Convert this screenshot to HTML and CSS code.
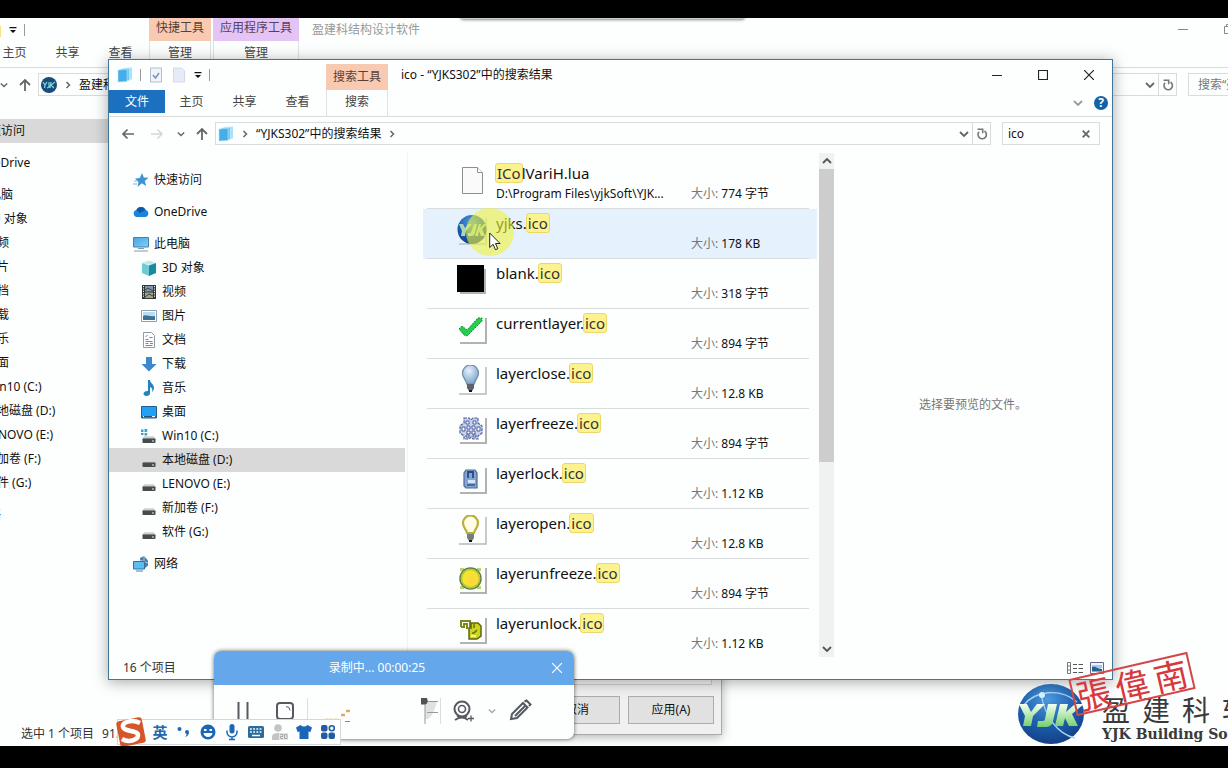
FILE: index.html
```html
<!DOCTYPE html>
<html lang="zh-CN">
<head>
<meta charset="utf-8">
<meta name="viewport" content="width=device-width, initial-scale=1">
<title>ico - “YJKS302”中的搜索结果</title>
<link rel="stylesheet" href="styles.css">
</head>
<body>
<svg class="defs" aria-hidden="true">
  <defs>
    <linearGradient id="sky" x1="0" y1="0" x2="1" y2="1"><stop offset="0" stop-color="#4aa5e4"/><stop offset="1" stop-color="#7fd0fa"/></linearGradient>
    <linearGradient id="driveTop" x1="0" y1="0" x2="0" y2="1"><stop offset="0" stop-color="#e4e4e4"/><stop offset="1" stop-color="#b4b8ba"/></linearGradient>
    <radialGradient id="globe" cx=".45" cy=".25" r=".8"><stop offset="0" stop-color="#4b9ade"/><stop offset=".55" stop-color="#1c5dab"/><stop offset="1" stop-color="#123c80"/></radialGradient>
    <linearGradient id="leaf" x1="0" y1="0" x2="0" y2="1"><stop offset="0" stop-color="#f4fff0"/><stop offset="1" stop-color="#74cf6c"/></linearGradient>
    <radialGradient id="glassBlue" cx=".4" cy=".3" r=".7"><stop offset="0" stop-color="#e4f1fb"/><stop offset="1" stop-color="#7ea6cb"/></radialGradient>
    <radialGradient id="sun" cx=".6" cy=".6" r=".6"><stop offset="0" stop-color="#ffd43c"/><stop offset="1" stop-color="#f1ec2b"/></radialGradient>
  </defs>
  <symbol id="i-results" viewBox="0 0 16 16"><path d="M6 1l9-.5v12L6 13z" fill="#a8e2fb"/><path d="M3.500 2l9-.5v12l-9 .5z" fill="#71c8f3" stroke="#c9effd" stroke-width=".6"/><path d="M1 3l9-.5v12L1 15z" fill="#45ade8" stroke="#b5e6fb" stroke-width=".6"/></symbol>
  <symbol id="i-chev-r" viewBox="0 0 8 8"><path d="M2.500 1l3 3-3 3" fill="none" stroke="#666" stroke-width="1.500"/></symbol>
  <symbol id="i-chev-d" viewBox="0 0 10 10"><path d="M1 3l4 4 4-4" fill="none" stroke="currentColor" stroke-width="1.800"/></symbol>
  <symbol id="i-left" viewBox="0 0 16 16"><path d="M14 8H3M7.500 3.500L3 8l4.500 4.500" fill="none" stroke="currentColor" stroke-width="1.700"/></symbol>
  <symbol id="i-right" viewBox="0 0 16 16"><path d="M2 8h11M8.500 3.500L13 8l-4.500 4.500" fill="none" stroke="currentColor" stroke-width="1.500"/></symbol>
  <symbol id="i-up" viewBox="0 0 16 16"><path d="M8 14V3M3 8l5-5 5 5" fill="none" stroke="currentColor" stroke-width="1.800"/></symbol>
  <symbol id="i-refresh" viewBox="0 0 14 14"><path d="M9.500 4A4.200 4.200 0 1 1 4 4.800M2.500 2.200h5.200v4" fill="none" stroke="#777" stroke-width="1.600"/></symbol>
  <symbol id="i-more" viewBox="0 0 8 8"><path d="M.5 1h7v1.200h-7zM1 4h6L4 7z" fill="#111"/></symbol>
  <symbol id="i-min" viewBox="0 0 10 10"><path d="M0 5.500h10" stroke="currentColor"/></symbol>
  <symbol id="i-max" viewBox="0 0 10 10"><path d="M.5.5h9v9h-9z" fill="none" stroke="currentColor" stroke-width="1.200"/></symbol>
  <symbol id="i-close" viewBox="0 0 10 10"><path d="M0 0l10 10M10 0L0 10" stroke="currentColor" stroke-width="1.200"/></symbol>
  <symbol id="i-restore" viewBox="0 0 10 10"><path d="M.5 2.500h7v7h-7zM2.500 2.500v-2h7v7h-2" fill="none" stroke="currentColor"/></symbol>
  <symbol id="i-drive" viewBox="0 0 16 16"><path d="M3 8h10l1.500 3h-13z" fill="url(#driveTop)"/><rect x="1.500" y="10.500" width="13" height="4.500" rx=".8" fill="#474b4e"/><rect x="11" y="12.500" width="2" height="1" fill="#cfe"/></symbol>
</svg>

<div class="bar bar--top"></div>
<main class="screen">

  <section class="window window--back" aria-label="盈建科结构设计软件">
    <header class="titlebar">
      <div class="quick">
        <svg class="i16" viewBox="0 0 16 16"><path d="M3 1h9v14H3z" fill="#f4cf5e"/><path d="M8 4h7v11H8z" fill="#fbe08a"/></svg>
        <svg class="i8"><use href="#i-more"/></svg><i class="sep"></i>
      </div>
      <span class="toolhead">快捷工具</span>
      <span class="toolhead toolhead--wide">应用程序工具</span>
      <h2 class="title">盈建科结构设计软件</h2>
      <div class="caption">
        <button aria-label="最小化"><svg class="i10"><use href="#i-min"/></svg></button>
        <button aria-label="还原"><svg class="i10"><use href="#i-restore"/></svg></button>
        <button aria-label="关闭"><svg class="i10"><use href="#i-close"/></svg></button>
      </div>
    </header>
    <div class="tabs">
      <button class="tab tab--file">文件</button><button class="tab">主页</button><button class="tab">共享</button><button class="tab">查看</button>
      <button class="tab tab--tool">管理</button><button class="tab tab--tool tab--wide">管理</button>
    </div>
    <div class="address">
      <button class="go go--back" aria-label="后退"><svg class="i16"><use href="#i-left"/></svg></button>
      <button class="go go--fwd" aria-label="前进"><svg class="i16"><use href="#i-right"/></svg></button>
      <button class="go go--recent" aria-label="最近"><svg class="i8"><use href="#i-chev-d"/></svg></button>
      <button class="go go--up" aria-label="上移"><svg class="i16"><use href="#i-up"/></svg></button>
      <div class="path">
        <svg class="i16" viewBox="0 0 16 16"><circle cx="8" cy="8" r="8" fill="#174d78"/><path d="M2 5l2 3 2-3M4 8l-.5 3M8 5v5l-2 1M10 5l-1 6M14 5l-4 3 3 3" fill="none" stroke="#7fd0d8" stroke-width="1.300"/></svg>
        <svg class="i8"><use href="#i-chev-r"/></svg><span>盈建科结构设计软件</span>
        <button class="drop" aria-label="历史"><svg class="i10"><use href="#i-chev-d"/></svg></button>
        <button class="refresh" aria-label="刷新"><svg class="i14"><use href="#i-refresh"/></svg></button>
      </div>
      <div class="search"><input aria-label="搜索" placeholder="搜索“盈建科结构设计软件”"></div>
    </div>
    <div class="body">
      <nav class="tree">
        <ul>
          <li class="root"><a href="#" class="on"><i class="i16"></i>快速访问</a></li>
          <li class="root"><a href="#"><i class="i16"></i>OneDrive</a></li>
          <li class="root"><a href="#"><i class="i16"></i>此电脑</a>
            <ul>
              <li><a href="#"><i class="i16"></i>3D 对象</a></li>
              <li><a href="#"><i class="i16"></i>视频</a></li>
              <li><a href="#"><i class="i16"></i>图片</a></li>
              <li><a href="#"><i class="i16"></i>文档</a></li>
              <li><a href="#"><i class="i16"></i>下载</a></li>
              <li><a href="#"><i class="i16"></i>音乐</a></li>
              <li><a href="#"><i class="i16"></i>桌面</a></li>
              <li><a href="#"><i class="i16"></i>Win10 (C:)</a></li>
              <li><a href="#"><i class="i16"></i>本地磁盘 (D:)</a></li>
              <li><a href="#"><i class="i16"></i>LENOVO (E:)</a></li>
              <li><a href="#"><i class="i16"></i>新加卷 (F:)</a></li>
              <li><a href="#"><i class="i16"></i>软件 (G:)</a></li>
            </ul>
          </li>
          <li class="root"><a href="#"><i class="i16"></i>网络</a></li>
        </ul>
      </nav>
    </div>
    <footer class="status"><span class="status__count">60 个项目</span><span>选中 1 个项目</span><span>91.5 KB</span></footer>
  </section>

  <div class="peek"></div>

  <div class="brand">
    <svg class="brand__globe" viewBox="0 0 68 60">
      <ellipse cx="34" cy="30" rx="33" ry="30" fill="url(#globe)"/>
      <path d="M6 22C18 6 44 4 60 18M24 10C28 32 40 50 58 54" fill="none" stroke="#a9d5f5" stroke-width="1.300"/>
      <circle cx="25" cy="11" r="3" fill="#d8f1ff"/>
      <path d="M2 20h8l4 8 6-8h8L16 32l-2 10H6l2-10zM31 20h9l-4 17q-1 6-8 6h-8l1-6h5q2 0 2-2zM43 20h8l-2 8 9-8h9L55 30l6 12h-9l-4-8-2 8h-8z" fill="url(#leaf)"/>
    </svg>
    <div class="brand__text">
      <div class="brand__cn"><span>盈</span><span>建</span><span>科</span><span>软</span><span>件</span></div>
      <div class="brand__en">YJK Building Software</div>
    </div>
  </div>

  <section class="dialog" aria-label="属性">
    <div class="dialog__page"></div>
    <div class="dialog__buttons"><button>取消</button><button>应用(A)</button></div>
  </section>

  <section class="window window--front" aria-label="搜索结果">
    <header class="titlebar">
      <div class="quick">
        <svg class="i16"><use href="#i-results"/></svg><i class="sep"></i>
        <svg class="i16" viewBox="0 0 16 16"><path d="M2.500 1h11v14h-11z" fill="#f0f4fb" stroke="#b3bdd0"/><path d="M5 8l2.500 3L11 6" fill="none" stroke="#7d8fb5" stroke-width="1.500"/></svg>
        <svg class="i16" viewBox="0 0 16 16"><path d="M2.500 1h8l3 3v11h-11z" fill="#e6ebf7" stroke="#d3d9e8"/></svg>
        <svg class="i8"><use href="#i-more"/></svg><i class="sep"></i>
      </div>
      <span class="toolhead">搜索工具</span>
      <h1 class="title">ico - “YJKS302”中的搜索结果</h1>
      <div class="caption">
        <button aria-label="最小化"><svg class="i10"><use href="#i-min"/></svg></button>
        <button aria-label="最大化"><svg class="i10"><use href="#i-max"/></svg></button>
        <button aria-label="关闭"><svg class="i10"><use href="#i-close"/></svg></button>
      </div>
    </header>
    <div class="tabs">
      <button class="tab tab--file">文件</button><button class="tab">主页</button><button class="tab">共享</button><button class="tab">查看</button>
      <button class="tab tab--tool">搜索</button>
      <div class="tabs__end">
        <button aria-label="展开功能区"><svg class="i10"><use href="#i-chev-d"/></svg></button>
        <button aria-label="帮助" class="help">?</button>
      </div>
    </div>
    <div class="address">
      <button class="go go--back" aria-label="后退"><svg class="i16"><use href="#i-left"/></svg></button>
      <button class="go go--fwd" aria-label="前进"><svg class="i16"><use href="#i-right"/></svg></button>
      <button class="go go--recent" aria-label="最近"><svg class="i8"><use href="#i-chev-d"/></svg></button>
      <button class="go go--up" aria-label="上移"><svg class="i16"><use href="#i-up"/></svg></button>
      <div class="path">
        <svg class="i16"><use href="#i-results"/></svg>
        <svg class="i8"><use href="#i-chev-r"/></svg><span>“YJKS302”中的搜索结果</span><svg class="i8"><use href="#i-chev-r"/></svg>
        <button class="drop" aria-label="历史"><svg class="i10"><use href="#i-chev-d"/></svg></button>
        <button class="refresh" aria-label="刷新"><svg class="i14"><use href="#i-refresh"/></svg></button>
      </div>
      <div class="search"><input aria-label="搜索" value="ico"><button aria-label="清除"><svg class="i8" viewBox="0 0 8 8"><path d="M.7.7l6.600 6.600M7.300.7L.7 7.300" stroke="#666" stroke-width="1.800"/></svg></button></div>
    </div>
    <div class="body">
      <nav class="tree">
        <ul>
          <li class="root"><a href="#"><svg class="i16" viewBox="0 0 16 16"><path d="M9 1l1.800 4.500 4.700.2-3.700 3.200 1.400 5-4.400-2.600L4.500 15l1-5L2 6.500l4.800-.6z" fill="#3d93d3"/><path d="M1 9h3M0 12h4" stroke="#79b9e6"/></svg>快速访问</a></li>
          <li class="root"><a href="#"><svg class="i16" viewBox="0 0 16 16"><path d="M4 13a3.500 3.500 0 0 1-.6-6.900A5 5 0 0 1 12.600 6 3.600 3.600 0 0 1 12.500 13z" fill="#1c84d8"/><path d="M3.400 6.100A5 5 0 0 1 12.600 6L7 9z" fill="#0c5aa8"/></svg>OneDrive</a></li>
          <li class="root"><a href="#"><svg class="i16" viewBox="0 0 16 16"><path d="M.5 1.500h15v9.500H.5z" fill="url(#sky)" stroke="#4b7fa6"/><path d="M5 12.500h6M1 15h14" stroke="#7d9bb0"/></svg>此电脑</a>
            <ul>
              <li><a href="#"><svg class="i16" viewBox="0 0 16 16"><path d="M1 3l7-2.500L15 3 9 5z" fill="#bfe9ee"/><path d="M1 3l7 2.500V16l-7-3z" fill="#6fcbd3"/><path d="M8 5.500L15 3v10l-7 3z" fill="#178a9e"/></svg>3D 对象</a></li>
              <li><a href="#"><svg class="i16" viewBox="0 0 16 16"><path d="M1 1h14v14H1z" fill="#33363b"/><path d="M4 2h8v5.500H4z" fill="#8297a9"/><path d="M4 8.500h8V14H4z" fill="#a3a477"/><path d="M2.500 2v12M13.500 2v12" stroke="#eee" stroke-dasharray="1.200 1.200"/><path d="M4 6l3-2 5 3M4 13l4-3 4 2" stroke="#34434e" fill="none"/></svg>视频</a></li>
              <li><a href="#"><svg class="i16" viewBox="0 0 16 16"><path d="M.5 2.500h15v11H.5z" fill="#fff" stroke="#8ca1b2"/><path d="M2 4h12v8H2z" fill="#bcdcf2"/><path d="M2 8c3-2 6 1 12 0v4H2z" fill="#3d7292"/></svg>图片</a></li>
              <li><a href="#"><svg class="i16" viewBox="0 0 16 16"><path d="M2.500.5h8l3 3v12h-11z" fill="#fff" stroke="#8b9dab"/><path d="M4.500 7.500h3M4.500 9.500h7M4.500 11.500h3M4.500 13.500h7M8.500 5.500h3M4.500 5l2-2M9 11.500h3" stroke="#4f93b7"/></svg>文档</a></li>
              <li><a href="#"><svg class="i16" viewBox="0 0 16 16"><path d="M5 1h6v7h4.500L8 15.500.5 8H5z" fill="#3d87cc"/></svg>下载</a></li>
              <li><a href="#"><svg class="i16" viewBox="0 0 16 16"><path d="M7 0h2c0 3 4 4 4 8 0 2-1 3-2 4 1-3 0-4-2-5v6.500c0 1.500-1.500 2.500-3.500 2.500S2.500 15 2.500 13.500 5 10.500 7 11z" fill="#2483bd"/></svg>音乐</a></li>
              <li><a href="#"><svg class="i16" viewBox="0 0 16 16"><path d="M.5 2.500h15v11.500H.5z" fill="#22a0f5" stroke="#235d8b"/><path d="M1 12.500h14" stroke="#1c5785"/><path d="M2 12.500h1M11 12.500h3" stroke="#fff"/></svg>桌面</a></li>
              <li><a href="#"><svg class="i16" viewBox="0 0 16 16"><use href="#i-drive"/><path d="M0 1.500h2.500V4H0zM3.500 1h2.700v3H3.500zM0 5h2.500v2H0zM3.500 5h2.700v2.500H3.500z" fill="#2aa9d6"/></svg>Win10 (C:)</a></li>
              <li><a href="#" class="on"><svg class="i16"><use href="#i-drive"/></svg>本地磁盘 (D:)</a></li>
              <li><a href="#"><svg class="i16"><use href="#i-drive"/></svg>LENOVO (E:)</a></li>
              <li><a href="#"><svg class="i16"><use href="#i-drive"/></svg>新加卷 (F:)</a></li>
              <li><a href="#"><svg class="i16"><use href="#i-drive"/></svg>软件 (G:)</a></li>
            </ul>
          </li>
          <li class="root"><a href="#"><svg class="i16" viewBox="0 0 16 16"><path d="M7 2l4-2 4 4.500v5L11 13 7 9z" fill="#4c7f9e"/><path d="M11 0v13M7 4l8 3" stroke="#a6cbe0"/><path d="M.5 5.500h11v7.500H.5z" fill="#5cbcf3" stroke="#356f9c"/><path d="M3 15h7" stroke="#7dabc9" stroke-width="1.500"/></svg>网络</a></li>
        </ul>
      </nav>

      <div class="results">
        <ul>
          <li class="row"><div class="file">
            <svg class="thumb" viewBox="0 0 30 30"><path d="M5.500 2.500h15l5 5v21h-20z" fill="#fafafb" stroke="#8f8f8f"/><path d="M20.500 2.500v5h5" fill="#fff" stroke="#8f8f8f"/></svg>
            <span class="name"><mark>ICo</mark>lVariH.lua</span><span class="where">D:\Program Files\yjkSoft\YJK...</span><span class="size">大小: <b>774 字节</b></span></div></li>
          <li class="row row--hover"><div class="file">
            <svg class="thumb" viewBox="0 0 30 30"><path d="M2 29h27V3" fill="none" stroke="#b6c4cf" stroke-width="1.500"/><circle cx="15" cy="14.500" r="14.500" fill="url(#globe)"/><path d="M2 9h4l2 4 3-4h4l-6 7-1 5H4l1-5zM17 9h3l-2 9q-1 3-4 3h-3v-3h2q1 0 1.500-2zM22 9h2l-1 4 4-4h3l-5 5 3 7h-4l-2-5-1 5h-3z" fill="#a9d6bc"/></svg>
            <span class="name">yjks.<mark>ico</mark></span><span class="size">大小: <b>178 KB</b></span></div></li>
          <li class="row"><div class="file">
            <svg class="thumb" viewBox="0 0 30 30"><path d="M3 4h26v25H3z" fill="#b2b2b2"/><path d="M0 0h27v27H0z"/></svg>
            <span class="name">blank.<mark>ico</mark></span><span class="size">大小: <b>318 字节</b></span></div></li>
          <li class="row"><div class="file">
            <svg class="thumb" viewBox="0 0 30 30"><path d="M3 28h26V3" fill="none" stroke="#b2b2b2" stroke-width="2"/><path d="M2 14l3-3 5 4L21 3l4 0v3L10 21 7 20z" fill="#24cf4c" stroke="#178a35" stroke-dasharray="2 1"/></svg>
            <span class="name">currentlayer.<mark>ico</mark></span><span class="size">大小: <b>894 字节</b></span></div></li>
          <li class="row"><div class="file">
            <svg class="thumb" viewBox="0 0 30 30"><path d="M2 29h27V2" fill="none" stroke="#b8b8b8" stroke-width="1.500"/><path d="M9.500 19C10 15 5 13 5.500 8a8 8 0 0 1 16 0c0 5-4 7-4 11z" fill="url(#glassBlue)" stroke="#6d8ba6" stroke-width="1.200"/><path d="M10 19h7v4l-2 3h-3l-2-3z" fill="#5c6269"/><path d="M12 25h3v2h-3z" fill="#111"/></svg>
            <span class="name">layerclose.<mark>ico</mark></span><span class="size">大小: <b>12.8 KB</b></span></div></li>
          <li class="row"><div class="file">
            <svg class="thumb" viewBox="0 0 30 30"><path d="M3 28h26V3" fill="none" stroke="#b2b2b2" stroke-width="2"/><path d="M7 3h5l2 2 2-2h5v5l4 3v7l-4 3v3h-5l-2-2-2 2H7v-3l-4-3v-7l4-3z" fill="#c9d2ea" stroke="#4c5f9d" stroke-width="1.200" stroke-dasharray="3 1"/><path d="M9 6h3v3H9zM16 6h3v3h-3zM5 12h3v4H5zM10 11h3v3h-3zM15 11h3v3h-3zM20 12h3v4h-3zM10 16h3v3h-3zM15 16h3v3h-3zM9 20h3v2H9zM16 20h3v2h-3z" fill="#fff" stroke="#4c5f9d"/></svg>
            <span class="name">layerfreeze.<mark>ico</mark></span><span class="size">大小: <b>894 字节</b></span></div></li>
          <li class="row"><div class="file">
            <svg class="thumb" viewBox="0 0 30 30"><path d="M3 28h26V3" fill="none" stroke="#b2b2b2" stroke-width="2"/><path d="M9 5h9l2 3v15H9l-2-2V8z" fill="#84a5d3" stroke="#4b6a98" stroke-width="1.200"/><path d="M11 13V7h5v6" fill="none" stroke="#2a4a7c" stroke-width="1.800"/><path d="M11 15h7v3h-7z" fill="#d5e5fa"/><path d="M10 20h8" stroke="#33588f" stroke-width="1.500"/></svg>
            <span class="name">layerlock.<mark>ico</mark></span><span class="size">大小: <b>1.12 KB</b></span></div></li>
          <li class="row"><div class="file">
            <svg class="thumb" viewBox="0 0 30 30"><path d="M2 29h27V2" fill="none" stroke="#b8b8b8" stroke-width="1.500"/><path d="M10 18C10 15 6 13 6 8a7.500 7.500 0 0 1 15 0c0 5-4 7-4 10z" fill="#fffde4" stroke="#b7af3c" stroke-width="2.200"/><path d="M10 19h7v4l-2 3h-3l-2-3z" fill="#777b7d"/><path d="M12 25h3v2h-3z" fill="#111"/></svg>
            <span class="name">layeropen.<mark>ico</mark></span><span class="size">大小: <b>12.8 KB</b></span></div></li>
          <li class="row"><div class="file">
            <svg class="thumb" viewBox="0 0 30 30"><path d="M3 28h26V3" fill="none" stroke="#b2b2b2" stroke-width="2"/><path d="M3 3h4v3H3zM20 3h4v3h-4zM3 21h4v3H3zM20 21h4v3h-4z" fill="#bdd273"/><circle cx="13.500" cy="13.500" r="10.500" fill="url(#sun)" stroke="#5d8245" stroke-width="1.500"/><circle cx="13.500" cy="13.500" r="9" fill="none" stroke="#b9c532" stroke-width="1.500"/></svg>
            <span class="name">layerunfreeze.<mark>ico</mark></span><span class="size">大小: <b>894 字节</b></span></div></li>
          <li class="row"><div class="file">
            <svg class="thumb" viewBox="0 0 30 30"><path d="M3 28h26V3" fill="none" stroke="#b2b2b2" stroke-width="2"/><path d="M4 12V6h9v6M4 12h3V9h3v5" fill="none" stroke="#7f8718" stroke-width="2"/><path d="M14 8h7l3 3v10l-4 3h-8V13h2z" fill="#cdd51f" stroke="#5d6611" stroke-width="1.500"/><path d="M15 18h2l3-3M17 9v4" stroke="#687013" stroke-width="1.500" fill="none"/><path d="M14 20h5v2h-5z" fill="#f4f786"/></svg>
            <span class="name">layerunlock.<mark>ico</mark></span><span class="size">大小: <b>1.12 KB</b></span></div></li>
        </ul>
      </div>
      <div class="scroll">
        <button aria-label="向上滚动" class="flip"><svg class="i10"><use href="#i-chev-d"/></svg></button>
        <div class="scroll__track"><div class="scroll__thumb"></div></div>
        <button aria-label="向下滚动"><svg class="i10"><use href="#i-chev-d"/></svg></button>
      </div>
      <aside class="preview">选择要预览的文件。</aside>
    </div>
    <footer class="status"><span>16 个项目</span>
      <div class="views">
        <button aria-label="详细信息"><svg class="i16" viewBox="0 0 16 16"><path d="M.5 2.500h3v11h-3zM.5 6h3M.5 10h3" fill="none" stroke="#777"/><path d="M6 4.500h4M11.500 4.500H16M6 8.500h4M11.500 8.500H16M6 12.500h4M11.500 12.500H16" stroke="#555"/></svg></button>
        <button aria-label="大图标"><svg class="i16" viewBox="0 0 16 16"><path d="M1.500 2.500h13v11h-13z" fill="#eef6fb" stroke="#668"/><path d="M3 5h10v3H3z" fill="#9ccdeb"/><path d="M3 7c4-1 5 2 10 2v2.500H3z" fill="#28628c"/></svg></button>
      </div>
    </footer>
  </section>

  <div class="pointer"><svg viewBox="0 0 12 19"><path d="M.7 1v14.500l3.400-3.200 2.300 5.400 2.400-1-2.300-5.200h4.600z" fill="#fff" stroke="#222"/></svg></div>

  <div class="stamp"><span>張</span><span>偉</span><span>南</span></div>

  <section class="recorder" aria-label="录制">
    <header><span>录制中... 00:00:25</span><button aria-label="关闭"><svg class="i10"><use href="#i-close"/></svg></button></header>
    <div class="recorder__tools">
      <button class="tool" aria-label="暂停"><svg viewBox="0 0 24 24"><path d="M7.500 3v20M16.500 3v20" stroke="#555a60" stroke-width="2"/></svg></button>
      <button class="tool" aria-label="停止"><svg viewBox="0 0 24 24"><rect x="4" y="4" width="16" height="16" rx="3" fill="none" stroke="#555a60" stroke-width="2"/><path d="M13 7.500q4 0 4 4" fill="none" stroke="#555a60"/></svg></button>
      <svg class="meter" viewBox="0 0 112 30"><path d="M.5 2v26" stroke="#ddd"/><path d="M18 24h14" stroke="#dfa968" stroke-width="2.500" stroke-dasharray="3.500 1"/><path d="M34 19h4M39 15h4" stroke="#dfa968" stroke-width="2.500"/><path d="M38 25.500h5" stroke="#888"/></svg>
      <svg class="volume" viewBox="0 0 22 30"><path d="M6 5h12c-2 8-4 14-9 18H6z" fill="#dfe1e2"/><path d="M6 4v24M6 5.500h13M8 16.500h11" stroke="#999"/><path d="M2 2h6q1.500 3 0 5.500l-2 1H2z" fill="#4d5357"/><path d="M21.500 2v26" stroke="#ddd"/></svg>
      <button class="tool tool--cam" aria-label="摄像头"><svg viewBox="0 0 24 24"><circle cx="11" cy="10" r="7.500" fill="none" stroke="#555a60" stroke-width="2"/><circle cx="11" cy="10" r="3.500" fill="none" stroke="#555a60" stroke-width="1.600"/><path d="M4 21q7-5 13 0M6.500 16.500L8 19M15.500 16.500L14 19" fill="none" stroke="#555a60" stroke-width="2"/><path d="M17 19.500h6M20 16.500v6" stroke="#555a60" stroke-width="1.300"/></svg></button>
      <button class="tool tool--drop" aria-label="更多"><svg class="i8"><use href="#i-chev-d"/></svg></button>
      <button class="tool" aria-label="画笔"><svg viewBox="0 0 24 24"><path d="M3 20l1-5L15 4l4.500 4.500L9 19zM16.500 2.500l2-1 4 4-1.500 1.500M7 17L17 7" fill="none" stroke="#555a60" stroke-width="2"/></svg></button>
    </div>
  </section>

  <div class="ime" role="toolbar" aria-label="输入法">
    <svg class="ime__logo" viewBox="0 0 34 32"><rect x="4" y="3" width="26" height="26" rx="3" fill="#d6562c" transform="rotate(-11 17 16)"/><path d="M26 7C18 3 8 6 9 11s15 3 15 8-9 8-16 4" fill="none" stroke="#fff" stroke-width="4.500"/></svg>
    <button class="ime__lang">英</button>
    <button aria-label="标点"><svg viewBox="0 0 18 18"><circle cx="4.500" cy="6" r="2" fill="#2467ae"/><path d="M10 9a2 2 0 1 1 4 0q0 4-4 5 2-2 1.500-3.300Q10 10.500 10 9z" fill="#2467ae"/></svg></button>
    <button aria-label="表情"><svg viewBox="0 0 18 18"><circle cx="9" cy="9" r="7.500" fill="#1b67b5"/><path d="M5 6h2.500v2H5zM10.500 6H13v2h-2.500zM4.500 10h9a4.500 4 0 0 1-9 0z" fill="#fff"/></svg></button>
    <button aria-label="语音"><svg viewBox="0 0 18 18"><rect x="6.500" y="1" width="5" height="9.500" rx="2.500" fill="#1b67b5"/><path d="M4 7.500V9a5 5 0 0 0 10 0V7.500M9 14v3M6 16.500h6" fill="none" stroke="#1b67b5" stroke-width="1.500"/></svg></button>
    <button aria-label="软键盘"><svg viewBox="0 0 18 18"><rect x="1" y="3" width="16" height="12" rx="1.500" fill="#2a6c9d"/><path d="M3 6h12M3 9h12" stroke="#fff" stroke-width="1.600" stroke-dasharray="1.800 1.400"/><path d="M5 12.500h8" stroke="#fff" stroke-width="1.500"/></svg></button>
    <button aria-label="账户"><svg viewBox="0 0 18 18"><circle cx="7" cy="5" r="3.800" fill="#c4c4c4"/><path d="M1 17v-3q0-4 6-4 5 0 6 3v4z" fill="#c4c4c4"/><path d="M8 10h9v7H8z" fill="#e6e6e6"/><path d="M9 11.500h3v2H9.500v2H12M13.500 11.500H16v4h-2.500z" fill="none" stroke="#aaa"/></svg></button>
    <button aria-label="皮肤"><svg viewBox="0 0 18 18"><path d="M5.500 2q3.500 3 7 0L17 4.500 15.500 9 13.500 8.500V16h-9V8.500L2.500 9 1 4.500z" fill="#1b67b5"/></svg></button>
    <button aria-label="工具箱"><svg viewBox="0 0 18 18"><rect x="2" y="2" width="6.500" height="6.500" rx="2" fill="#215da0"/><rect x="2" y="9.500" width="6.500" height="6.500" rx="2" fill="#215da0"/><rect x="9.500" y="9.500" width="6.500" height="6.500" rx="2" fill="#215da0"/><circle cx="12.800" cy="5.200" r="2.500" fill="none" stroke="#215da0" stroke-width="1.600"/></svg></button>
  </div>
</main>
<div class="bar bar--bottom"></div>
</body>
</html>
```
FILE: styles.css
```css
* { box-sizing: border-box; }

body {
  margin: 0;
  height: 100vh;
  display: flex;
  flex-direction: column;
  overflow: hidden;
  background: #000;
  color: #222;
  font: 12px/16px "Noto Sans", "Noto Sans CJK SC", sans-serif;
}

button, input { font: inherit; color: inherit; }
button { padding: 0; border: 0; background: none; display: flex; align-items: center; justify-content: center; }
ul { list-style: none; margin: 0; padding: 0; }
a { color: inherit; text-decoration: none; }
h1, h2 { margin: 0; font: inherit; }
svg { display: block; flex: none; }

.defs { position: absolute; width: 0; height: 0; }
.i8 { width: 8px; height: 8px; }
.i10 { width: 10px; height: 10px; }
.i14 { width: 14px; height: 14px; }
.i16 { width: 16px; height: 16px; flex: none; }

.bar--top { flex: 0 0 18px; }
.bar--bottom { flex: 0 0 22px; }

.screen { position: relative; flex: 1; overflow: hidden; background: #fdfffe; }

/* Explorer windows */
.window { position: absolute; display: flex; flex-direction: column; background: #fdfffe; border: 1px solid #3f7798; }
.window--back { inset: -8px -71px 0 -69px; border-color: transparent; }
.window--front { inset: 41px 115px 66px 108px; box-shadow: 0 2px 14px rgba(0, 0, 0, .35); }

.titlebar { display: flex; height: 30px; }
.quick { flex: 0 0 217px; display: flex; align-items: center; gap: 7px; padding-left: 8px; }
.quick .sep { width: 1px; height: 12px; background: #999; }
.toolhead { flex: 0 0 62px; align-self: flex-end; height: 26px; line-height: 26px; text-align: center; background: #f8cab2; color: #5a4034; }
.toolhead--wide { flex-basis: 86px; margin-left: 2px; background: #e3c4f5; color: #54405f; }
.title { flex: 1; padding-left: 13px; line-height: 30px; color: #111; white-space: nowrap; }
.caption { display: flex; }
.caption button { width: 46px; }
.window--back .title { color: #999; padding-top: 4px; }
.window--back .quick { padding: 8px 0 0 54px; }
.window--back .caption { padding-top: 6px; color: #888; }

.tabs { display: flex; height: 27px; border-bottom: 1px solid #d9dcdd; color: #444; }
.tab { width: 53px; height: 23px; }
.tab--file { width: 56px; background: #1b70bf; color: #fff; }
.tab--tool { width: 62px; height: 26px; margin-left: 2px; padding-bottom: 3px; border: 1px solid #e0e3e4; border-width: 0 1px; }
.tab--wide { width: 86px; }
.tabs__end { display: flex; align-items: center; gap: 11px; margin-left: auto; padding-right: 4px; color: #999; }
.help { width: 14px; height: 14px; border-radius: 50%; background: #1462a8; color: #fff; font-weight: 700; }

.address { display: flex; height: 36px; padding: 5px 12px 8px 4px; color: #666; }
.go--back { width: 30px; }
.go--fwd { width: 28px; color: #d4d6d7; }
.go--recent { width: 20px; }
.go--up { width: 22px; margin-right: 2px; }
.path { flex: 1; display: flex; align-items: center; gap: 7px; padding-left: 2px; border: 1px solid #d9dcdd; color: #111; }
.path .drop { width: 16px; margin-left: auto; color: #666; }
.path .refresh { width: 18px; align-self: stretch; margin-left: -7px; border-left: 1px solid #d9dcdd; }
.search { display: flex; width: 98px; margin-left: 11px; padding: 0 9px 0 5px; border: 1px solid #d9dcdd; }
.search input { flex: 1; min-width: 0; padding: 0; border: 0; outline: 0; background: none; color: #111; }
.search input::placeholder { color: #777; opacity: 1; }
.window--back .search { padding: 0 0 0 9px; }

.body { flex: 1; display: flex; min-height: 0; }
.tree { flex: 0 0 299px; padding: 15px 2px 0 0; border-right: 1px solid #f1f3f3; color: #111; }
.tree a { display: flex; align-items: center; gap: 5px; height: 24px; padding-left: 32px; white-space: nowrap; }
.tree .root { margin-bottom: 8px; }
.tree .root > a { padding-left: 24px; }
.tree a.on { background: #d9d9d9; }

.results { flex: 1 1 411px; min-width: 0; padding: 6px 2px 0 15px; overflow: hidden; }
.row--hover { background: #e5f2fe; }
.file {
  display: grid;
  grid-template-columns: 30px 186px 1fr;
  grid-template-rows: 27px 16px;
  column-gap: 9px;
  height: 50px;
  margin: 0 8px 0 4px;
  padding-left: 30px;
  border-bottom: 1px solid #d9dcdd;
  color: #111;
  white-space: nowrap;
}
.thumb { width: 30px; height: 30px; grid-row: 1 / 3; margin-top: 6px; }
.name { grid-column: 2 / 4; font-size: 15px; line-height: 28px; }
.name mark { display: inline-block; margin: 0 -1px; padding: 0 1px; border: 1px solid #ecd768; border-radius: 3px; background: #fdf38e; line-height: 18px; color: #333; }
.name mark:first-child:not(:last-child), .name mark { vertical-align: baseline; }
.where { grid-area: 2 / 2; }
.size { grid-area: 2 / 3; color: #777; }
.size b { font-weight: 400; color: #111; }

.scroll { flex: 0 0 15px; display: flex; flex-direction: column; background: #f0f2f1; }
.scroll button { height: 16px; color: #555; }
.scroll .flip svg { transform: rotate(180deg); }
.scroll__track { flex: 1; }
.scroll__thumb { height: 62%; background: #cdcdcd; }
.preview { flex: 1 1 278px; min-width: 0; display: flex; align-items: center; justify-content: center; color: #777; }

.status { flex: 0 0 22px; display: flex; align-items: center; gap: 8px; padding: 0 7px 0 14px; color: #333; line-height: 20px; white-space: nowrap; }
.status__count { min-width: 67px; }
.views { display: flex; gap: 6px; margin-left: auto; }

.peek { position: absolute; top: -8px; left: 460px; width: 285px; height: 9px; border-radius: 4px; background: #ccc; box-shadow: 0 1px 3px #888; }

/* Cursor with its yellow halo */
.pointer { position: absolute; left: 466px; top: 190px; width: 48px; height: 48px; padding: 24px 0 0 23px; border-radius: 50%; background: rgba(240, 242, 60, .6); }
.pointer svg { width: 12px; height: 19px; }

/* Desktop branding */
.brand { position: absolute; left: 1017px; bottom: 2px; display: flex; align-items: flex-end; gap: 17px; white-space: nowrap; color: #3a3a3a; }
.brand__globe { width: 68px; height: 60px; }
.brand__cn { display: flex; gap: 12px; font: 28px/30px "Noto Sans CJK SC", sans-serif; }
.brand__en { font: 700 14px/20px "DejaVu Serif", serif; }
.stamp {
  position: absolute; left: 1071px; top: 647px; width: 122px; height: 38px;
  display: flex; align-items: center; justify-content: space-around;
  border: 2px solid #d3474a; color: #d8383c;
  font: 34px/34px "Noto Sans CJK TC", sans-serif;
  transform: rotate(-13deg);
}

/* Dialog behind the search window */
.dialog { position: absolute; left: 340px; top: 300px; width: 382px; bottom: 11px; display: flex; flex-direction: column; padding: 8px 7px 8px 8px; border: 1px solid #a9a9a9; background: #f0f0f0; box-shadow: 0 2px 10px rgba(0, 0, 0, .3); }
.dialog__page { flex: 1; margin-right: 2px; border: 1px solid #d2d2d2; background: #f7f7f7; }
.dialog__buttons { display: flex; justify-content: flex-end; gap: 8px; padding: 11px 0 2px; }
.dialog__buttons button { width: 86px; height: 28px; border: 1px solid #adadad; background: #e1e1e1; color: #111; }

/* Screen recorder */
.recorder { position: absolute; left: 214px; bottom: 7px; width: 360px; border-radius: 7px; overflow: hidden; background: #fdfffe; box-shadow: 0 0 4px rgba(0, 0, 0, .6); }
.recorder header { display: flex; height: 34px; background: #64a7ea; color: #fff; }
.recorder header span { flex: 1; line-height: 33px; text-align: center; }
.recorder header button { width: 34px; }
.recorder__tools { display: flex; align-items: center; height: 54px; padding: 0 0 2px 15px; }
.tool { width: 27px; margin-right: 15px; }
.tool svg { width: 24px; height: 24px; }
.tool--drop svg { width: 8px; height: 8px; color: #aaa; }
.meter { width: 112px; height: 30px; margin-left: -6px; }
.volume { width: 22px; height: 30px; }
.tool--cam { margin: 0 8px; }
.tool--drop { width: 16px; margin-right: 6px; }

/* Input method toolbar */
.ime { position: absolute; left: 117px; bottom: 1px; display: flex; align-items: center; height: 26px; border: 1px solid #d3d7da; background: #fdfffe; color: #2467ae; }
.ime__logo { width: 34px; height: 32px; margin: 0 0 0 -4px; }
.ime button { width: 24px; height: 24px; }
.ime button svg { width: 18px; height: 18px; }
.ime .ime__lang { font-size: 15px; font-weight: 700; }
```
